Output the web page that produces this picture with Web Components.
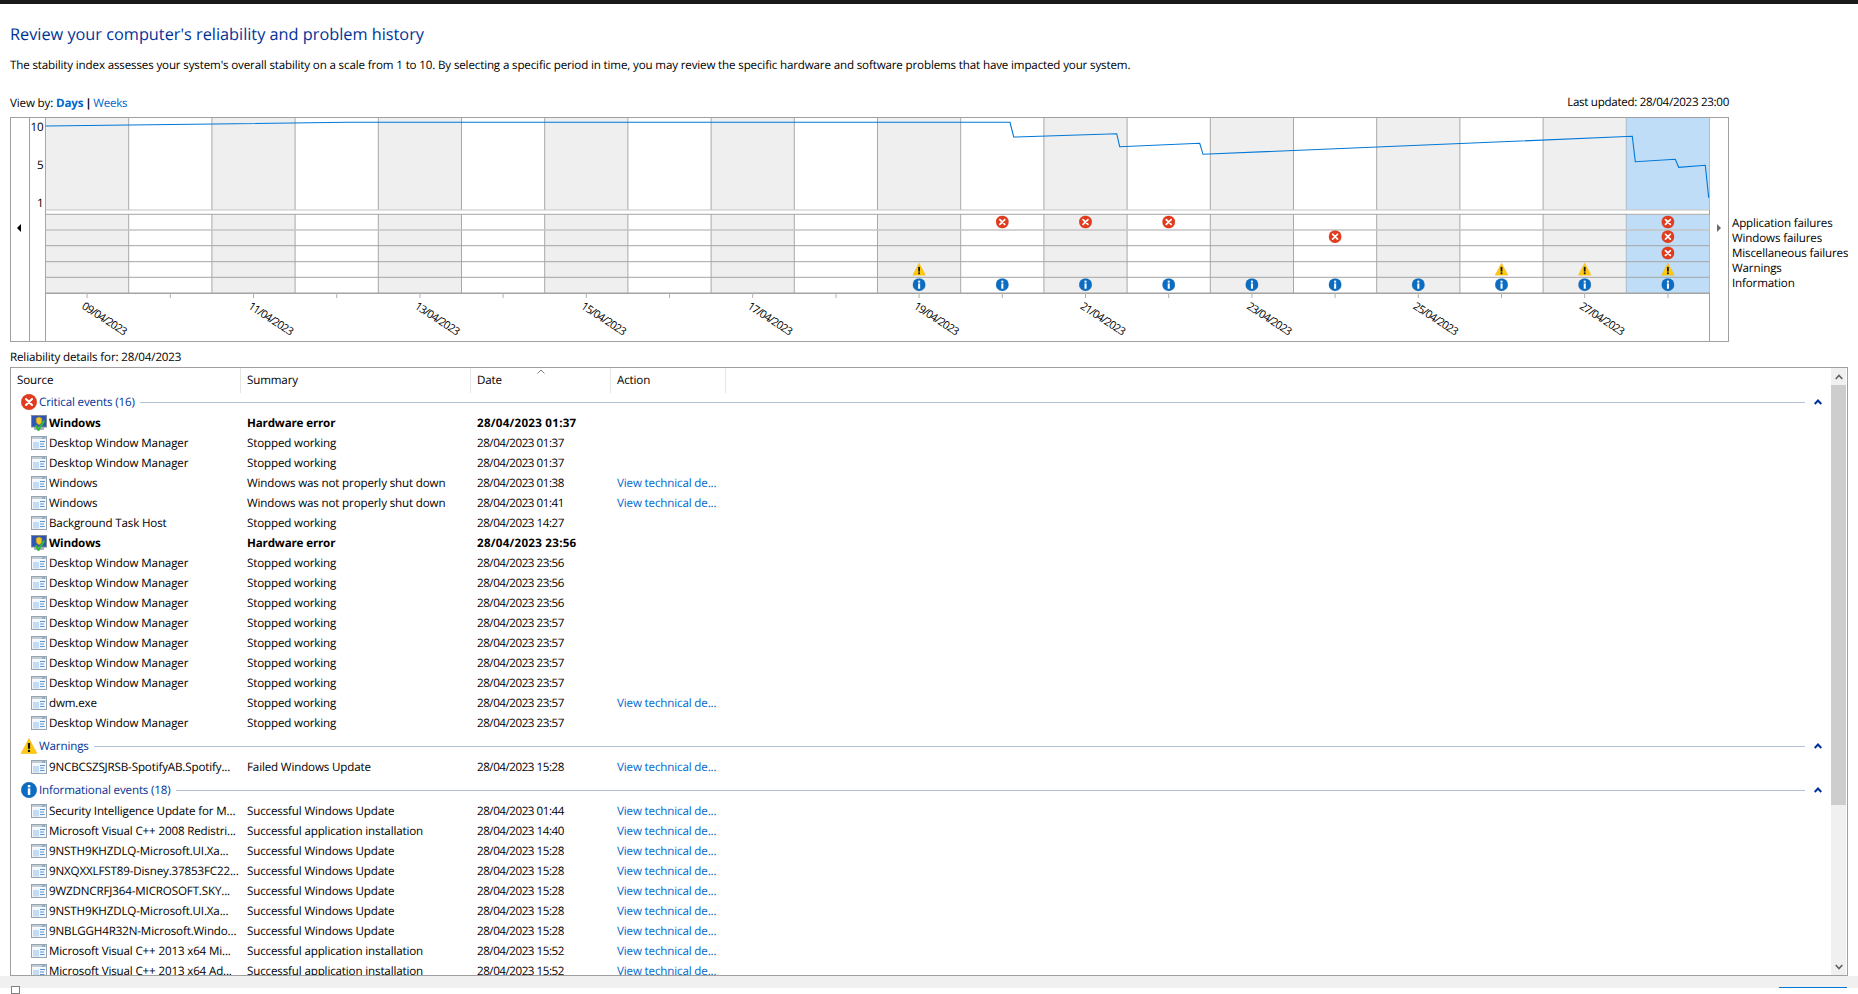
<!DOCTYPE html>
<html lang="en">
<head>
<meta charset="utf-8">
<title>Reliability Monitor</title>
<style>
  html, body { margin: 0; height: 994px; overflow: hidden; background: #fff; }
  body { font: 11.6px "Open Sans", "Liberation Sans", sans-serif; letter-spacing: -0.15px; text-rendering: geometricPrecision; color: #000; }
</style>
</head>
<body>
<reliability-page>
  <span slot="title">Review your computer's reliability and problem history</span>
  <span slot="intro">The stability index assesses your system's overall stability on a scale from 1 to 10. By selecting a specific period in time, you may review the specific hardware and software problems that have impacted your system.</span>
  <stability-chart slot="chart"></stability-chart>
  <details-list slot="details">
    <event-group kind="error" label="Critical events (16)">
      <event-row icon="hardware" bold source="Windows" summary="Hardware error" date="28/04/2023 01:37"></event-row>
      <event-row source="Desktop Window Manager" summary="Stopped working" date="28/04/2023 01:37"></event-row>
      <event-row source="Desktop Window Manager" summary="Stopped working" date="28/04/2023 01:37"></event-row>
      <event-row source="Windows" summary="Windows was not properly shut down" date="28/04/2023 01:38" action></event-row>
      <event-row source="Windows" summary="Windows was not properly shut down" date="28/04/2023 01:41" action></event-row>
      <event-row source="Background Task Host" summary="Stopped working" date="28/04/2023 14:27"></event-row>
      <event-row icon="hardware" bold source="Windows" summary="Hardware error" date="28/04/2023 23:56"></event-row>
      <event-row source="Desktop Window Manager" summary="Stopped working" date="28/04/2023 23:56"></event-row>
      <event-row source="Desktop Window Manager" summary="Stopped working" date="28/04/2023 23:56"></event-row>
      <event-row source="Desktop Window Manager" summary="Stopped working" date="28/04/2023 23:56"></event-row>
      <event-row source="Desktop Window Manager" summary="Stopped working" date="28/04/2023 23:57"></event-row>
      <event-row source="Desktop Window Manager" summary="Stopped working" date="28/04/2023 23:57"></event-row>
      <event-row source="Desktop Window Manager" summary="Stopped working" date="28/04/2023 23:57"></event-row>
      <event-row source="Desktop Window Manager" summary="Stopped working" date="28/04/2023 23:57"></event-row>
      <event-row source="dwm.exe" summary="Stopped working" date="28/04/2023 23:57" action></event-row>
      <event-row source="Desktop Window Manager" summary="Stopped working" date="28/04/2023 23:57"></event-row>
    </event-group>
    <event-group kind="warning" label="Warnings">
      <event-row source="9NCBCSZSJRSB-SpotifyAB.Spotify..." summary="Failed Windows Update" date="28/04/2023 15:28" action></event-row>
    </event-group>
    <event-group kind="info" label="Informational events (18)">
      <event-row source="Security Intelligence Update for M..." summary="Successful Windows Update" date="28/04/2023 01:44" action></event-row>
      <event-row source="Microsoft Visual C++ 2008 Redistri..." summary="Successful application installation" date="28/04/2023 14:40" action></event-row>
      <event-row source="9NSTH9KHZDLQ-Microsoft.UI.Xa..." summary="Successful Windows Update" date="28/04/2023 15:28" action></event-row>
      <event-row source="9NXQXXLFST89-Disney.37853FC22..." summary="Successful Windows Update" date="28/04/2023 15:28" action></event-row>
      <event-row source="9WZDNCRFJ364-MICROSOFT.SKY..." summary="Successful Windows Update" date="28/04/2023 15:28" action></event-row>
      <event-row source="9NSTH9KHZDLQ-Microsoft.UI.Xa..." summary="Successful Windows Update" date="28/04/2023 15:28" action></event-row>
      <event-row source="9NBLGGH4R32N-Microsoft.Windo..." summary="Successful Windows Update" date="28/04/2023 15:28" action></event-row>
      <event-row source="Microsoft Visual C++ 2013 x64 Mi..." summary="Successful application installation" date="28/04/2023 15:52" action></event-row>
      <event-row source="Microsoft Visual C++ 2013 x64 Ad..." summary="Successful application installation" date="28/04/2023 15:52" action></event-row>
    </event-group>
  </details-list>
</reliability-page>

<script>
// Shared icons, all drawn on a 16 unit box
const ICONS = {
  error: `<circle cx="8" cy="8" r="7.7" fill="#e23b1e" stroke="#cf3418" stroke-width=".5"/><path d="M5 5l6 6M11 5l-6 6" stroke="#fff" stroke-width="2.1" stroke-linecap="round"/>`,
  warning: `<path d="M8 .5L15.9 15.4H.1z" fill="#ffc90e" stroke="#eeb000" stroke-width=".5"/><rect x="6.9" y="5" width="2.2" height="5.8" fill="#111"/><rect x="6.9" y="11.8" width="2.2" height="2.2" fill="#111"/>`,
  info: `<circle cx="8" cy="8" r="7.7" fill="#0a6cc2" stroke="#0b5da6" stroke-width=".5"/><rect x="6.8" y="3" width="2.5" height="2.4" fill="#fff"/><rect x="6.8" y="6.4" width="2.5" height="6.6" fill="#fff"/>`,
  app: `<rect x=".5" y="1.5" width="15" height="13" fill="#f6f8fb" stroke="#98a3ae"/><rect x="1" y="2" width="14" height="2" fill="#c3cbd4"/><rect x="11" y="2.5" width="3" height="1" fill="#5b93d3"/><rect x="2" y="5" width="12" height="8.5" fill="#f0f6fc"/><rect x="2" y="7" width="6" height="6.5" fill="#c4dcf3"/><rect x="9" y="6" width="5" height="1" fill="#5b93d3"/><rect x="9" y="8.5" width="4" height="1" fill="#5b93d3"/><rect x="9" y="11" width="4.5" height="1" fill="#5b93d3"/>`,
  hardware: `<rect x=".5" y=".5" width="15" height="11.5" fill="#2f55b8" stroke="#7d8a9c"/><rect x="3" y="12" width="10" height="3" fill="#a9b2bc"/><path d="M8 2l2.8 1.2v3.2c0 1.7-1.3 2.8-2.8 3.4-1.5-.6-2.8-1.7-2.8-3.4V3.2z" fill="#f2c51e" stroke="#a98a10" stroke-width=".5"/><path d="M4.5 10.5l3 4.3 5.8-9.3" fill="none" stroke="#35b53f" stroke-width="2.3"/>`
};
const icon = (name, size) => `<svg width="${size}" height="${size}" viewBox="0 0 16 16" aria-hidden="true">${ICONS[name]}</svg>`;

const templatePage = document.createElement('template');
templatePage.innerHTML = `
  <style>
    :host { display: flex; flex-direction: column; height: 994px; }
    .topbar { height: 4px; background: #1a1a1a; }
    .content { padding: 0 10px; display: flex; flex-direction: column; }
    h1 { margin: 20px 0 0; height: 20px; font-size: 16.3px; line-height: 20px; font-weight: 400; letter-spacing: 0; color: #003399; }
    .intro { margin: 13px 0 0; height: 18px; line-height: 18px; white-space: nowrap; }
    .bar { margin-top: 19px; width: 1719px; height: 18px; line-height: 20px; display: flex; justify-content: space-between; }
    .bar a { color: #0066cc; text-decoration: none; letter-spacing: -0.3px; }
    .bar b { color: #0066cc; font-weight: 700; }
    .bar .sep { font-weight: 700; margin: 0 -1px; }
    .updated { letter-spacing: -0.3px; line-height: 18px; }
    .charts { margin-top: 5px; }
    .detail-label { height: 25px; line-height: 31px; }
    .strip { height: 12px; background: #f0f0f0; position: relative; }
    .grip { position: absolute; left: 11px; top: 10px; width: 7px; height: 6px; border: 1px solid #808080; background: #fff; }
    .tab { position: absolute; right: 11px; top: 11px; width: 68px; height: 1px; background: #0078d7; }
  </style>
  <div class="topbar"></div>
  <div class="content">
    <h1><slot name="title"></slot></h1>
    <div class="intro"><slot name="intro"></slot></div>
    <div class="bar">
      <span>View by: <b>Days</b> <span class="sep">|</span> <a href="#">Weeks</a></span>
      <span class="updated">Last updated: 28/04/2023 23:00</span>
    </div>
    <div class="charts"><slot name="chart"></slot></div>
    <div class="detail-label">Reliability details for: 28/04/2023</div>
    <slot name="details"></slot>
  </div>
  <div class="strip"><div class="grip"></div><div class="tab"></div></div>
`;

class ReliabilityPage extends HTMLElement {
  constructor() {
    super();
    this.attachShadow({ mode: 'open' }).appendChild(templatePage.content.cloneNode(true));
  }
}

// The chart is a free canvas, so it is one svg that uses page coordinates
class StabilityChart extends HTMLElement {
  constructor() {
    super();
    this.attachShadow({ mode: 'open' });
  }

  connectedCallback() {
    this.render();
  }

  render() {
    const left = 45.5, col = 83.2, cols = 20;
    const colX = i => left + col * i;
    const mid = i => colX(i) + col / 2;
    const right = colX(cols);
    let cells = '', lines = '', marks = '', dates = '';

    for (let i = 0; i < cols; i++) {
      const fill = i === 19 ? '#bfddf6' : i % 2 === 0 ? '#efefef' : '#fff';
      cells += `<rect x="${colX(i)}" y="118" width="${col}" height="92" fill="${fill}"/>`;
      cells += `<rect x="${colX(i)}" y="215" width="${col}" height="78" fill="${fill}"/>`;
      lines += `<path d="M${colX(i)} 118V210M${colX(i)} 214V293" stroke="${i >= 19 ? '#a9b9c6' : '#a8a8a8'}"/>`;
      marks += `<path d="M${mid(i)} 293v5" stroke="#b0b0b0"/>`;
      if (i % 2 === 0 && i < 19) {
        const day = String(9 + i).padStart(2, '0');
        dates += `<text transform="translate(${mid(i) - 6} 308) rotate(33)" class="date">${day}/04/2023</text>`;
      }
    }
    [210, 214.3, 230, 245.7, 261.7, 277.3, 293.3].forEach((y, n) => {
      const soft = n === 0 || n === 2;
      lines += `<path d="M${left} ${y}H${right}" stroke="${soft ? '#c4c4c4' : '#a4a4a4'}" stroke-width="${n === 2 || n === 6 ? 1.5 : 1}"/>`;
    });

    const rows = { error1: 222, error2: 236.7, error3: 253, warning: 269.3, info: 284.7 };
    const put = (kind, y, list) => list.forEach(i => {
      marks += `<svg x="${mid(i) - 6.5}" y="${y - 6.5}" width="13" height="13" viewBox="0 0 16 16">${ICONS[kind]}</svg>`;
    });
    put('error', rows.error1, [11, 12, 13, 19]);
    put('error', rows.error2, [15, 19]);
    put('error', rows.error3, [19]);
    put('warning', rows.warning, [10, 17, 18, 19]);
    put('info', rows.info, [10, 11, 12, 13, 14, 15, 16, 17, 18, 19]);

    const curve = [[45.5, 126], [348, 122.3], [1010, 122.3], [1013.7, 137], [1116.7, 133.7], [1119.7, 146.7],
      [1199.7, 143.3], [1203, 154.3], [1632.3, 136.3], [1635.3, 161.7], [1675.3, 159.3], [1678.7, 167.3],
      [1705.3, 165.3], [1708.7, 197.7]];

    this.shadowRoot.innerHTML = `
      <style>
        :host { display: block; width: 1838px; height: 225px; }
        svg { display: block; }
        text { fill: #000; }
        .date { font-size: 11px; letter-spacing: -0.8px; }
      </style>
      <svg width="1838" height="225" viewBox="10 117 1838 225">
        <rect x="10.5" y="117.5" width="1718" height="224" fill="#fff" stroke="#a0a0a0"/>
        <path d="M29.5 118V341M45.5 118V341M1709.5 118V341" stroke="#a0a0a0" fill="none"/>
        ${cells}${lines}
        <polyline points="${curve.join(' ')}" fill="none" stroke="#0078d7" stroke-width="1.1"/>
        ${marks}${dates}
        <text x="43.5" y="130.5" text-anchor="end">10</text>
        <text x="43.5" y="169" text-anchor="end">5</text>
        <text x="43.5" y="206.5" text-anchor="end">1</text>
        <path d="M17 228l4-4v8z" fill="#000"/>
        <path d="M1717 224l4 4-4 4z" fill="#6a6a6a"/>
        <text x="1732" y="227">Application failures</text>
        <text x="1732" y="242">Windows failures</text>
        <text x="1732" y="257">Miscellaneous failures</text>
        <text x="1732" y="272">Warnings</text>
        <text x="1732" y="287">Information</text>
      </svg>
    `;
  }
}

const templateList = document.createElement('template');
templateList.innerHTML = `
  <style>
    :host { display: flex; width: 1836px; height: 607px; border: 1px solid #a0a0a0; position: relative; background: #fff; }
    .main { flex: 1; min-width: 0; overflow: hidden; }
    .head { display: grid; grid-template-columns: 230px 230px 140px 115px; height: 23px; }
    .head span { padding-left: 6px; line-height: 25px; border-right: 1px solid #e5e5e5; }
    .caret { position: absolute; left: 526px; top: 1px; }
    .scroll { width: 15px; margin-right: 1px; display: flex; flex-direction: column; background: #f0f0f0; }
    .btn { height: 17px; display: flex; align-items: center; justify-content: center; }
    .thumb { height: 420px; background: #cdcdcd; }
    .track { flex: 1; }
  </style>
  <div class="main">
    <div class="head"><span>Source</span><span>Summary</span><span>Date</span><span>Action</span></div>
    <slot></slot>
  </div>
  <svg class="caret" width="8" height="5" viewBox="0 0 8 5"><path d="M.5 4.5L4 1l3.5 3.5" fill="none" stroke="#808080"/></svg>
  <div class="scroll">
    <div class="btn"><svg width="8" height="6" viewBox="0 0 8 6"><path d="M.7 5L4 1.5 7.3 5" fill="none" stroke="#606060" stroke-width="1.6"/></svg></div>
    <div class="thumb"></div>
    <div class="track"></div>
    <div class="btn"><svg width="8" height="6" viewBox="0 0 8 6"><path d="M.7 1L4 4.5 7.3 1" fill="none" stroke="#606060" stroke-width="1.6"/></svg></div>
  </div>
`;

class DetailsList extends HTMLElement {
  constructor() {
    super();
    this.attachShadow({ mode: 'open' }).appendChild(templateList.content.cloneNode(true));
  }
}

const templateGroup = document.createElement('template');
templateGroup.innerHTML = `
  <style>
    :host { display: block; }
    :host(:not(:first-child)) { padding-top: 2px; }
    .title { display: flex; align-items: center; height: 22px; padding-left: 10px; color: #003399; }
    .icon { display: flex; width: 16px; height: 16px; margin-right: 2px; }
    .rule { flex: 1; height: 1px; background: #b4bfd9; margin-left: 5px; }
    .chevron { display: flex; justify-content: center; width: 26px; }
  </style>
  <div class="title">
    <span class="icon"></span>
    <span class="label"></span>
    <span class="rule"></span>
    <span class="chevron"><svg width="8" height="6" viewBox="0 0 8 6"><path d="M.7 5L4 1.5 7.3 5" fill="none" stroke="#003399" stroke-width="2"/></svg></span>
  </div>
  <slot></slot>
`;

class EventGroup extends HTMLElement {
  constructor() {
    super();
    this.attachShadow({ mode: 'open' }).appendChild(templateGroup.content.cloneNode(true));
  }

  connectedCallback() {
    this.shadowRoot.querySelector('.icon').innerHTML = icon(this.getAttribute('kind'), 16);
    this.shadowRoot.querySelector('.label').textContent = this.getAttribute('label');
  }
}

const templateRow = document.createElement('template');
templateRow.innerHTML = `
  <style>
    :host { display: grid; grid-template-columns: 230px 230px 140px 115px; height: 20px; line-height: 22px; white-space: nowrap; }
    :host([bold]) { font-weight: 700; }
    .source { display: flex; align-items: center; height: 20px; padding-left: 20px; }
    .source svg { margin-right: 2px; flex: none; }
    .source span { line-height: 20px; padding-top: 2px; }
    .cell { padding-left: 6px; }
    .date { letter-spacing: -0.45px; }
    :host([bold]) .date { letter-spacing: 0.25px; }
    a { color: #0066cc; text-decoration: none; }
  </style>
  <div class="source"></div>
  <div class="cell summary"></div>
  <div class="cell date"></div>
  <div class="cell action"></div>
`;

class EventRow extends HTMLElement {
  constructor() {
    super();
    this.attachShadow({ mode: 'open' }).appendChild(templateRow.content.cloneNode(true));
  }

  connectedCallback() {
    const root = this.shadowRoot;
    root.querySelector('.source').innerHTML = icon(this.getAttribute('icon') || 'app', 16) + `<span>${this.getAttribute('source')}</span>`;
    root.querySelector('.summary').textContent = this.getAttribute('summary');
    root.querySelector('.date').textContent = this.getAttribute('date');
    if (this.hasAttribute('action')) {
      root.querySelector('.action').innerHTML = '<a href="#">View technical de...</a>';
    }
  }
}

window.customElements.define('reliability-page', ReliabilityPage);
window.customElements.define('stability-chart', StabilityChart);
window.customElements.define('details-list', DetailsList);
window.customElements.define('event-group', EventGroup);
window.customElements.define('event-row', EventRow);
</script>
</body>
</html>
